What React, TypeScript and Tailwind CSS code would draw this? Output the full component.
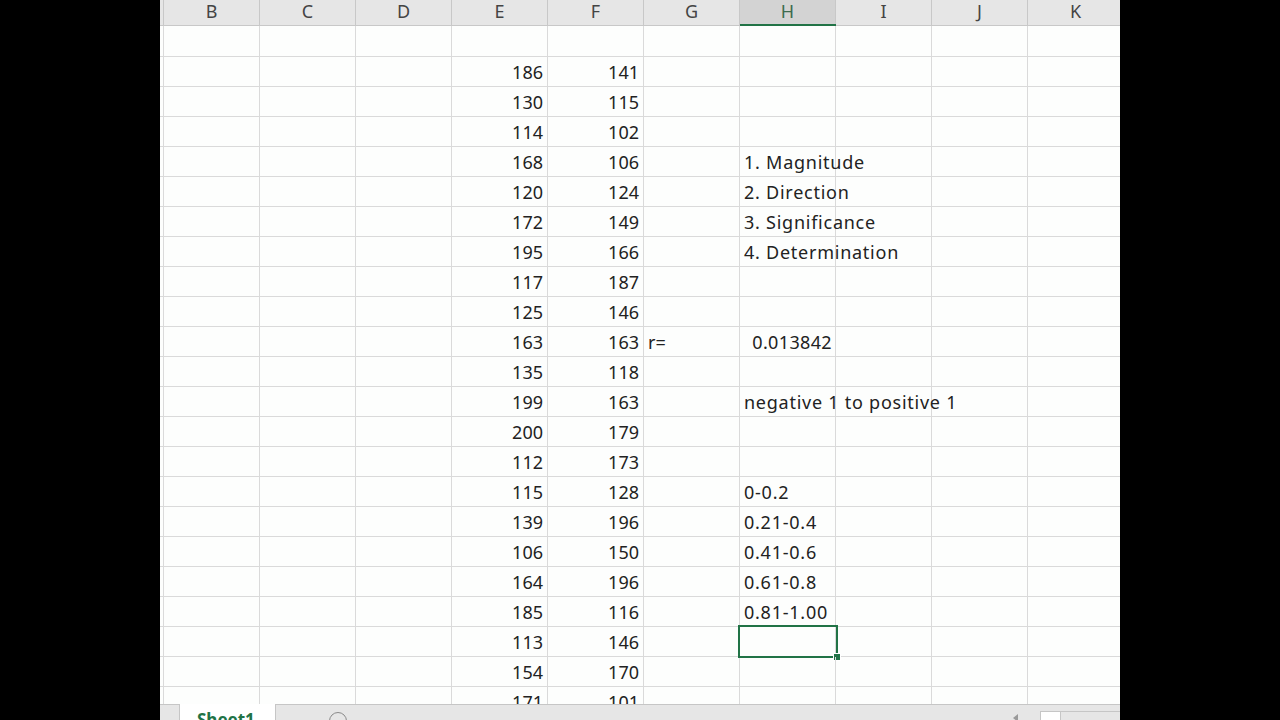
import React from "react";

const cols = ["B", "C", "D", "E", "F", "G", "H", "I", "J", "K"];

type Row = { e?: string; f?: string; g?: string; h?: string; hRight?: boolean; sel?: boolean };

const rows: Row[] = [
  {},
  { e: "186", f: "141" },
  { e: "130", f: "115" },
  { e: "114", f: "102" },
  { e: "168", f: "106", h: "1. Magnitude" },
  { e: "120", f: "124", h: "2. Direction" },
  { e: "172", f: "149", h: "3. Significance" },
  { e: "195", f: "166", h: "4. Determination" },
  { e: "117", f: "187" },
  { e: "125", f: "146" },
  { e: "163", f: "163", g: "r=", h: "0.013842", hRight: true },
  { e: "135", f: "118" },
  { e: "199", f: "163", h: "negative 1 to positive 1" },
  { e: "200", f: "179" },
  { e: "112", f: "173" },
  { e: "115", f: "128", h: "0-0.2" },
  { e: "139", f: "196", h: "0.21-0.4" },
  { e: "106", f: "150", h: "0.41-0.6" },
  { e: "164", f: "196", h: "0.61-0.8" },
  { e: "185", f: "116", h: "0.81-1.00" },
  { e: "113", f: "146", sel: true },
  { e: "154", f: "170" },
  { e: "171", f: "101" },
];

export default function App() {
  return (
    <div
      className="w-[1280px] h-[720px] bg-black flex justify-center overflow-hidden"
      style={{ fontFamily: '"Noto Sans", "Open Sans", sans-serif' }}
    >
      <div className="w-[960px] h-full bg-[#fdfefd] flex flex-col overflow-hidden">
        {/* column headers */}
        <div className="h-[26px] shrink-0 flex bg-[#e6e6e6] border-b border-[#c8c8c8]">
          <div className="w-[4px] shrink-0 border-r border-[#c8c8c8]" />
          {cols.map((c) =>
            c === "H" ? (
              <div
                key={c}
                className="w-[96px] shrink-0 border-r border-[#c8c8c8] bg-[#d3d3d3] flex items-center justify-center pb-[3px] text-[18px] text-[#3d6b4e] relative"
              >
                {c}
                <div className="absolute left-0 right-[-1px] bottom-[-1px] h-[2px] bg-[#217346]" />
              </div>
            ) : (
              <div
                key={c}
                className="w-[96px] shrink-0 border-r border-[#c8c8c8] flex items-center justify-center pb-[3px] text-[18px] text-[#444444]"
              >
                {c}
              </div>
            )
          )}
        </div>

        {/* body */}
        <div className="flex-1 overflow-hidden">
          {rows.map((r, i) => (
            <div
              key={i}
              className={
                "flex border-b border-[#dadada] text-[18px] text-[#222222] leading-none " +
                (i === 0 ? "h-[31px]" : "h-[30px]")
              }
            >
              <div className="w-[4px] shrink-0 border-r border-[#dadada]" />
              <div className="w-[96px] shrink-0 border-r border-[#dadada]" />
              <div className="w-[96px] shrink-0 border-r border-[#dadada]" />
              <div className="w-[96px] shrink-0 border-r border-[#dadada]" />
              <div className="w-[96px] shrink-0 border-r border-[#dadada] flex items-center justify-end pr-[4px]">
                {r.e}
              </div>
              <div className="w-[96px] shrink-0 border-r border-[#dadada] flex items-center justify-end pr-[4px]">
                {r.f}
              </div>
              <div className="w-[96px] shrink-0 border-r border-[#dadada] flex items-center pl-[4px]">
                {r.g}
              </div>
              <div
                className={
                  "w-[96px] shrink-0 border-r border-[#dadada] flex items-center whitespace-nowrap relative " +
                  (r.hRight ? "justify-end pr-[3px] tracking-[0.35px]" : "pl-[4px] tracking-[0.75px]")
                }
              >
                {r.h}
                {r.sel && (
                  <div className="absolute left-[-2px] top-[-2px] w-[100px] h-[33px] border-2 border-[#217346]">
                    <div className="absolute right-[-5px] bottom-[-5px] w-[8px] h-[8px] bg-[#217346] border border-white" />
                  </div>
                )}
              </div>
              <div className="w-[96px] shrink-0 border-r border-[#dadada]" />
              <div className="w-[96px] shrink-0 border-r border-[#dadada]" />
              <div className="w-[96px] shrink-0 border-r border-[#dadada]" />
            </div>
          ))}
        </div>

        {/* sheet tab bar */}
        <div className="h-[16px] shrink-0 flex bg-[#e6e6e6] overflow-hidden">
          <div className="w-[20px] shrink-0 border-t border-r border-[#c6c6c6]" />
          <div className="w-[96px] shrink-0 bg-white border-r border-[#c6c6c6] pl-[17px] pt-[7px] text-[17px] font-bold text-[#217346] leading-none">
            Sheet1
          </div>
          <div className="flex-1 border-t border-[#c6c6c6] flex relative">
            <div className="ml-[53px] mt-[7px] w-[18px] h-[18px] rounded-full border border-[#8a8a8a] shrink-0" />
            <div className="ml-auto mt-[9px] w-[0px] h-[0px] border-y-[4px] border-y-transparent border-r-[5px] border-r-[#9a9a9a]" />
            <div className="ml-[22px] mt-[6px] w-[20px] h-[12px] bg-white border-t border-l border-[#c6c6c6]" />
            <div className="w-[60px] mt-[6px] h-[12px] border-t border-l border-[#c6c6c6]" />
          </div>
        </div>
      </div>
    </div>
  );
}
